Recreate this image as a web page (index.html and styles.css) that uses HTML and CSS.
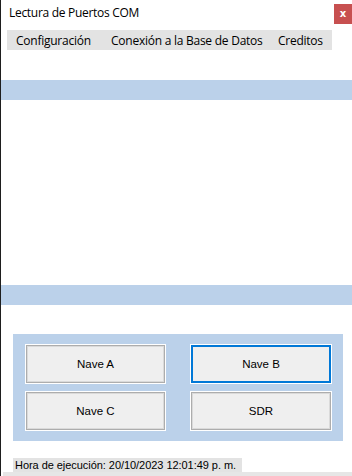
FILE: index.html
```
<!doctype html>
<html lang="es">
<head>
	<meta charset="UTF-8">
	<title>Lectura de Puertos COM</title>
	<link rel="stylesheet" href="styles.css">
</head>
<body>
<div class="ventana">
	<div class="titulo">
		<span class="titulo-texto">Lectura de Puertos COM</span>
		<span class="cerrar">x</span>
	</div>
	<div class="menu">
		<span class="menu-item item-config">Configuración</span>
		<span class="menu-item item-conexion">Conexión a la Base de Datos</span>
		<span class="menu-item">Creditos</span>
	</div>
	<div class="barra barra-arriba"></div>
	<div class="contenido"></div>
	<div class="barra"></div>
	<div class="panel">
		<button class="boton">Nave A</button>
		<button class="boton activo">Nave B</button>
		<button class="boton">Nave C</button>
		<button class="boton">SDR</button>
	</div>
	<div class="estado">
		<span class="hora">Hora de ejecución: 20/10/2023 12:01:49 p. m.</span>
	</div>
	<div class="pie"></div>
</div>
</body>
</html>
```

FILE: styles.css
```
*{
	margin:0;
	padding:0;
	box-sizing: border-box;
}
body {
	background: #fff;
	width: 352px;
	height: 476px;
	overflow: hidden;
}
.ventana {
	height: 476px;
	border-left: 1px solid #1e1e1e;
	display: flex;
	flex-direction: column;
	font-family: "Open Sans", "Noto Sans", sans-serif;
	color: #000;
}
.titulo {
	height: 30px;
	flex-shrink: 0;
	display: flex;
	align-items: flex-start;
	justify-content: space-between;
}
.titulo-texto {
	font-size: 12px;
	margin: 4px 0 0 8px;
	letter-spacing: -0.3px;
}
.cerrar {
	width: 18px;
	height: 20px;
	margin-top: 4px;
	background: #c75050;
	color: #fff;
	font-family: "DejaVu Sans", sans-serif;
	font-weight: bold;
	font-size: 10px;
	line-height: 19px;
	text-align: center;
}
.menu {
	margin-left: 6px;
	width: 325px;
	height: 20px;
	flex-shrink: 0;
	background: #e3e3e3;
	display: flex;
	align-items: center;
	padding-left: 9px;
	font-size: 12px;
	letter-spacing: -0.25px;
	white-space: nowrap;
}
.menu-item {
	flex-shrink: 0;
}
.item-config {
	width: 95px;
}
.item-conexion {
	width: 167px;
}
.barra {
	height: 20px;
	flex-shrink: 0;
	background: #bbd1ea;
}
.barra-arriba {
	margin-top: 30px;
}
.contenido {
	height: 185px;
	flex-shrink: 0;
}
.panel {
	margin: 29px 0 0 12px;
	width: 330px;
	height: 107px;
	flex-shrink: 0;
	background: #bbd1ea;
	padding: 10px 11px 10px 12px;
	display: grid;
	grid-template-columns: 141px 142px;
	grid-template-rows: 40px 40px;
	column-gap: 24px;
	row-gap: 7px;
}
.boton {
	background: #efefef;
	border: 1px solid #fff;
	box-shadow: inset 0 0 0 1px #adadad, inset 0 0 0 2px #dadada;
	font-family: "Liberation Sans", Arial, sans-serif;
	font-size: 11.5px;
	color: #000;
}
.boton.activo {
	box-shadow: inset 0 0 0 2px #0078d7;
}
.estado {
	margin: 17px 0 0 12px;
	height: 14px;
	flex-shrink: 0;
	display: flex;
}
.hora {
	height: 14px;
	width: 229px;
	background: #e3e3e3;
	padding-left: 2px;
	font-family: "Liberation Sans", Arial, sans-serif;
	font-size: 11px;
	line-height: 14px;
	letter-spacing: -0.05px;
	white-space: nowrap;
}
.pie {
	margin-left: 2px;
	flex: 1;
	background: #e6e6e6;
}
```
